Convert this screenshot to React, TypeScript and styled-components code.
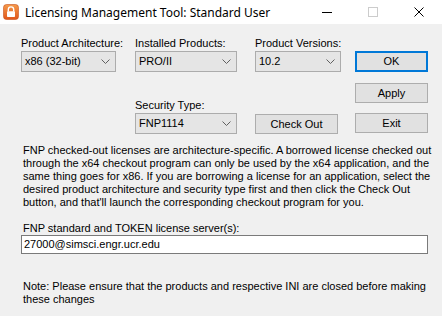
import React from "react";
import styled, { createGlobalStyle } from "styled-components";

const Global = createGlobalStyle`
  html, body { margin: 0; padding: 0; background: #f0f0f0; }
  * { box-sizing: border-box; }
`;

const Window = styled.div`
  width: 442px;
  height: 316px;
  background: #f0f0f0;
  display: flex;
  flex-direction: column;
  overflow: hidden;
  font-family: "Liberation Sans", Arial, sans-serif;
  font-size: 11px;
  color: #000;
`;

const TitleBar = styled.div`
  height: 24px;
  background: #fff;
  display: flex;
  align-items: center;
  padding-left: 3px;
  flex-shrink: 0;
`;

const TitleText = styled.div`
  margin-left: 6px;
  font-family: "Noto Sans", "Open Sans", sans-serif;
  font-size: 12px;
  color: #000;
  flex: 1;
  white-space: nowrap;
`;

const Caption = styled.div`
  width: 46px;
  height: 24px;
  display: flex;
  align-items: center;
  justify-content: center;
`;

const Content = styled.div`
  padding: 0 14px 0 21px;
  display: flex;
  flex-direction: column;
`;

const Grid = styled.div`
  margin-top: 10px;
  display: grid;
  grid-template-columns: 114px 120px 100px 73px;
  grid-template-rows: 17px 21px 41px 21px;
`;

const Label = styled.div<{ $col: number; $row: number }>`
  grid-column: ${(p) => p.$col};
  grid-row: ${(p) => p.$row};
  align-self: end;
  line-height: 13px;
  padding-bottom: 1px;
  white-space: nowrap;
`;

const ComboBox = styled.div<{ $col: number; $row: number; $w: number }>`
  grid-column: ${(p) => p.$col};
  grid-row: ${(p) => p.$row};
  width: ${(p) => p.$w}px;
  height: 21px;
  align-self: start;
  background: #e5e5e5;
  border: 1px solid #acacac;
  display: flex;
  align-items: center;
  justify-content: space-between;
  padding: 0 5px 0 3px;
  line-height: 13px;
`;

const Button = styled.div<{ $col: number; $row: number; $w: number; $top?: number; $default?: boolean }>`
  grid-column: ${(p) => p.$col};
  grid-row: ${(p) => p.$row};
  width: ${(p) => p.$w}px;
  height: ${(p) => (p.$default ? 21 : 20)}px;
  margin-top: ${(p) => p.$top ?? 0}px;
  align-self: start;
  background: #e1e1e1;
  border: ${(p) => (p.$default ? "2px solid #0078d7" : "1px solid #adadad")};
  display: flex;
  align-items: center;
  justify-content: center;
  line-height: 13px;
`;

const Paragraph = styled.p<{ $top: number }>`
  margin: ${(p) => p.$top}px 0 0 2px;
  line-height: 13px;
  white-space: nowrap;
`;

const ServerInput = styled.div`
  width: 407px;
  height: 19px;
  background: #fff;
  border: 1px solid #7a7a7a;
  display: flex;
  align-items: center;
  padding-left: 2px;
  line-height: 13px;
`;

const Chevron = () => (
  <svg width="9" height="5" viewBox="0 0 9 5">
    <path d="M0.5 0.5 L4.5 4.5 L8.5 0.5" fill="none" stroke="#606060" strokeWidth="1" />
  </svg>
);

const LockIcon = () => (
  <svg width="16" height="16" viewBox="0 0 16 16">
    <defs>
      <linearGradient id="lg" x1="0" y1="0" x2="0" y2="1">
        <stop offset="0" stopColor="#f59a4a" />
        <stop offset="1" stopColor="#e0561a" />
      </linearGradient>
    </defs>
    <rect x="0.5" y="0.5" width="15" height="15" rx="3" fill="url(#lg)" stroke="#c8501c" strokeWidth="0.6" />
    <path d="M5.3 7.5 V5.6 a2.7 2.7 0 0 1 5.4 0 V7.5" fill="none" stroke="#fff" strokeWidth="1.4" />
    <rect x="4" y="7.3" width="8" height="5.7" rx="0.8" fill="#fff" />
  </svg>
);

export default function App() {
  return (
    <>
      <Global />
      <Window>
        <TitleBar>
          <LockIcon />
          <TitleText>Licensing Management Tool: Standard User</TitleText>
          <Caption>
            <svg width="10" height="10" viewBox="0 0 10 10">
              <path d="M0 5.5 H10" stroke="#000" strokeWidth="1" />
            </svg>
          </Caption>
          <Caption>
            <svg width="10" height="10" viewBox="0 0 10 10">
              <rect x="0.5" y="0.5" width="9" height="9" fill="none" stroke="#cccccc" strokeWidth="1" />
            </svg>
          </Caption>
          <Caption>
            <svg width="10" height="10" viewBox="0 0 10 10">
              <path d="M0.5 0.5 L9.5 9.5 M9.5 0.5 L0.5 9.5" stroke="#000" strokeWidth="1" />
            </svg>
          </Caption>
        </TitleBar>
        <Content>
          <Grid>
            <Label $col={1} $row={1}>Product Architecture:</Label>
            <Label $col={2} $row={1}>Installed Products:</Label>
            <Label $col={3} $row={1}>Product Versions:</Label>
            <ComboBox $col={1} $row={2} $w={95}>
              <span>x86 (32-bit)</span>
              <Chevron />
            </ComboBox>
            <ComboBox $col={2} $row={2} $w={102}>
              <span>PRO/II</span>
              <Chevron />
            </ComboBox>
            <ComboBox $col={3} $row={2} $w={86}>
              <span>10.2</span>
              <Chevron />
            </ComboBox>
            <Button $col={4} $row={2} $w={73} $default>OK</Button>
            <Button $col={4} $row={3} $w={73} $top={11}>Apply</Button>
            <Label $col={2} $row={3}>Security Type:</Label>
            <ComboBox $col={2} $row={4} $w={102}>
              <span>FNP1114</span>
              <Chevron />
            </ComboBox>
            <Button $col={3} $row={4} $w={83} $top={1}>Check Out</Button>
            <Button $col={4} $row={4} $w={73}>Exit</Button>
          </Grid>
          <Paragraph $top={10}>
            FNP checked-out licenses are architecture-specific. A borrowed license checked out
            <br />
            through the x64 checkout program can only be used by the x64 application, and the
            <br />
            same thing goes for x86. If you are borrowing a license for an application, select the
            <br />
            desired product architecture and security type first and then click the Check Out
            <br />
            button, and that'll launch the corresponding checkout program for you.
          </Paragraph>
          <Paragraph $top={13}>FNP standard and TOKEN license server(s):</Paragraph>
          <ServerInput>27000@simsci.engr.ucr.edu</ServerInput>
          <Paragraph $top={26}>
            Note: Please ensure that the products and respective INI are closed before making
            <br />
            these changes
          </Paragraph>
        </Content>
      </Window>
    </>
  );
}
